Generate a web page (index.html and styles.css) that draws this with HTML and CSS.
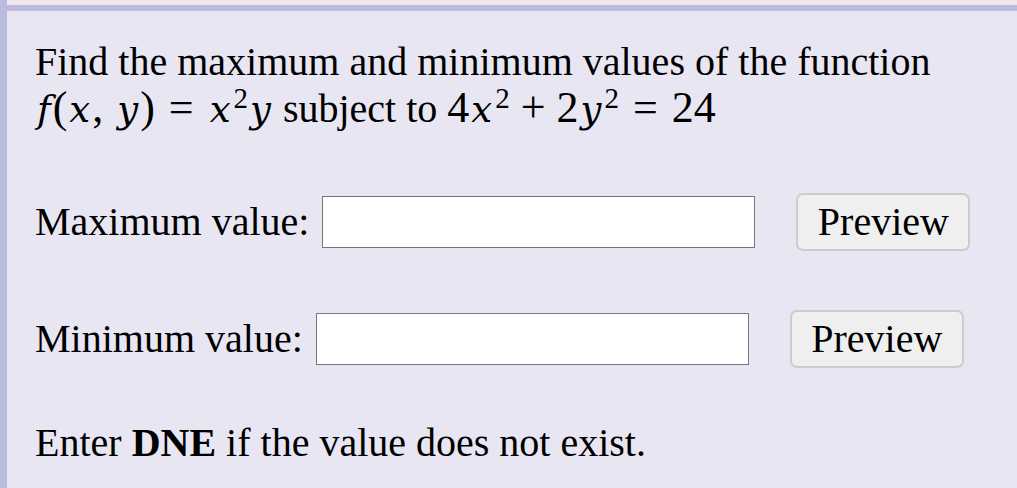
FILE: index.html
```html
<!DOCTYPE html>
<html>
<head>
<meta charset="utf-8">
<link rel="stylesheet" href="styles.css">
</head>
<body>
<div class="frame">
  <div class="content">
    <p class="question">Find the maximum and minimum values of the function<br><span class="math"><i>f</i>(<i>x</i>,<span class="thin"></span><i>y</i>)<span class="rel">=</span><i>x</i><sup>2</sup><i>y</i></span> subject to <span class="math">4<i>x</i><sup>2</sup><span class="bin">+</span>2<i>y</i><sup>2</sup><span class="rel">=</span>24</span></p>
    <div class="row row-max">
      <span class="label">Maximum value:</span>
      <input class="answer" type="text">
      <button class="preview" type="button">Preview</button>
    </div>
    <div class="row row-min">
      <span class="label">Minimum value:</span>
      <input class="answer" type="text">
      <button class="preview" type="button">Preview</button>
    </div>
    <p class="note">Enter <b>DNE</b> if the value does not exist.</p>
  </div>
</div>
</body>
</html>
```

FILE: styles.css
```css
html, body {
  margin: 0;
  padding: 0;
  background: #e8e6f2;
}
body {
  font-family: "Liberation Serif", "Times New Roman", serif;
  font-size: 40px;
  line-height: 46px;
  color: #000;
}
.frame {
  border-left: 7px solid #bbbbdd;
  background: #f2e6ef;
  padding-top: 5px;
  height: 483px;
}
.content {
  border-top: 6px solid #bbbbdd;
  background: #e8e6f2;
  padding: 28px 0 0 28px;
  height: 449px;
}
.question {
  margin: 0;
}
.math {
  font-size: 44px;
  line-height: 46px;
}
.math i {
  font-family: "DejaVu Serif", "Liberation Serif", serif;
  font-style: italic;
  font-size: 37px;
  margin: 0 2px;
}
.math sup {
  font-size: 29px;
  line-height: 0;
  position: relative;
  top: 2px;
  margin-left: 1px;
}
.math .rel {
  margin: 0 14px;
}
.math .bin {
  margin: 0 11px;
}
.thin {
  display: inline-block;
  width: 12px;
}
.row {
  display: flex;
  align-items: center;
  height: 58px;
}
.row-max {
  margin-top: 60px;
}
.row-min {
  margin-top: 59px;
}
.answer {
  box-sizing: border-box;
  width: 433px;
  height: 52px;
  margin: 0 0 0 13px;
  border: 1px solid #767676;
  background: #fff;
  padding: 0 4px;
  font-family: "Liberation Serif", serif;
  font-size: 40px;
}
.preview {
  box-sizing: border-box;
  height: 58px;
  width: 174px;
  margin-left: 41px;
  border: 2px solid #cccccc;
  border-radius: 7px;
  background: #efefef;
  font-family: "Liberation Serif", serif;
  font-size: 40px;
  line-height: 46px;
  color: #000;
  padding: 0;
}
.note {
  margin: 52px 0 0 0;
}
```
